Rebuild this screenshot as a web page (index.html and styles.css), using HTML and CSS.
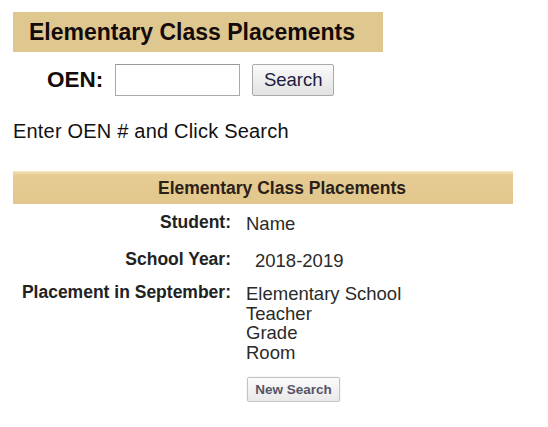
FILE: index.html
```html
<!DOCTYPE html>
<html lang="en">

<head>
	<meta charset="UTF-8">
	<meta name="viewport" content="width=device-width, initial-scale=1.0">
	<title>Elementary Class Placements</title>
	<link rel="stylesheet" href="styles.css">
</head>

<body>
	<div class="page">
		<h1 class="title">Elementary Class Placements</h1>
		<form class="search-form" action="/placement">
			<label for="oen">OEN:</label>
			<input type="text" id="oen" name="oen">
			<button type="submit">Search</button>
		</form>
		<p class="hint">Enter OEN # and Click Search</p>

		<section class="result">
			<h3 class="result-head">Elementary Class Placements</h3>
			<div class="result-row">
				<span class="label">Student:</span>
				<span class="value">Name</span>
			</div>
			<div class="result-row year">
				<span class="label">School Year:</span>
				<span class="value indent">2018-2019</span>
			</div>
			<div class="result-row placement">
				<span class="label">Placement in September:</span>
				<div class="value">
					Elementary School<br>
					Teacher<br>
					Grade<br>
					Room
					<div class="again"><button type="button">New Search</button></div>
				</div>
			</div>
		</section>
	</div>
</body>

</html>
```

FILE: styles.css
```css
html,
body {
	margin: 0;
	background: #fff;
}

body {
	font-family: "Liberation Sans", Arial, sans-serif;
	color: #111;
}

.page {
	padding: 12px 0 0 13px;
}

.title {
	width: 354px;
	height: 40px;
	margin: 0;
	padding-left: 16px;
	background: #dfc890;
	font-size: 23px;
	line-height: 40px;
	font-weight: bold;
	color: #140a0a;
}

.search-form {
	display: flex;
	align-items: center;
	gap: 12px;
	margin: 12px 0 0;
	padding-left: 34px;
	height: 32px;
}

.search-form label {
	font-size: 22.5px;
	font-weight: bold;
	color: #140a0a;
}

.search-form input {
	box-sizing: border-box;
	width: 125px;
	height: 32px;
	margin: 0;
	border: 1px solid #aaa;
	border-top-color: #999;
	background: #fff;
}

.search-form button {
	box-sizing: border-box;
	width: 82px;
	height: 32px;
	margin: 0;
	border: 1px solid #a9a9a9;
	border-radius: 2px;
	background: linear-gradient(#fafafa, #e2e2e2);
	font-family: "Liberation Sans", Arial, sans-serif;
	font-size: 18.5px;
	color: #1c1c40;
}

.hint {
	margin: 23px 0 0;
	font-size: 20px;
	line-height: 24px;
	letter-spacing: 0.2px;
	color: #111;
}

.result {
	width: 500px;
	margin-top: 28px;
}

.result-head {
	height: 33px;
	margin: 0;
	padding-left: 38px;
	background: linear-gradient(#f4e6c4 0, #e6cc92 12%, #e1c78c 100%);
	text-align: center;
	font-size: 17.5px;
	line-height: 35px;
	font-weight: bold;
	color: #2b2119;
}

.result-row {
	display: grid;
	grid-template-columns: 218px 1fr;
	column-gap: 15px;
	align-items: start;
	margin-top: 8px;
}

.result-row.year {
	margin-top: 15.5px;
}

.result-row.placement {
	margin-top: 11.5px;
}

.label {
	text-align: right;
	font-size: 17.5px;
	line-height: 20px;
	font-weight: bold;
	color: #222;
}

.value {
	padding-top: 2px;
	font-size: 18.5px;
	line-height: 19.5px;
	color: #2a2a2a;
}

.value.indent {
	padding-left: 9px;
}

.again {
	margin-top: 15px;
	margin-left: 1px;
}

.again button {
	box-sizing: border-box;
	width: 93px;
	height: 25px;
	border: 1px solid #c4c4c4;
	border-radius: 2px;
	background: linear-gradient(#fbfbfb, #e9e9e9);
	box-shadow: 0 0 2px #ddd;
	font-family: "Liberation Sans", Arial, sans-serif;
	font-size: 13.5px;
	font-weight: bold;
	color: #555566;
	padding: 0;
}
```
